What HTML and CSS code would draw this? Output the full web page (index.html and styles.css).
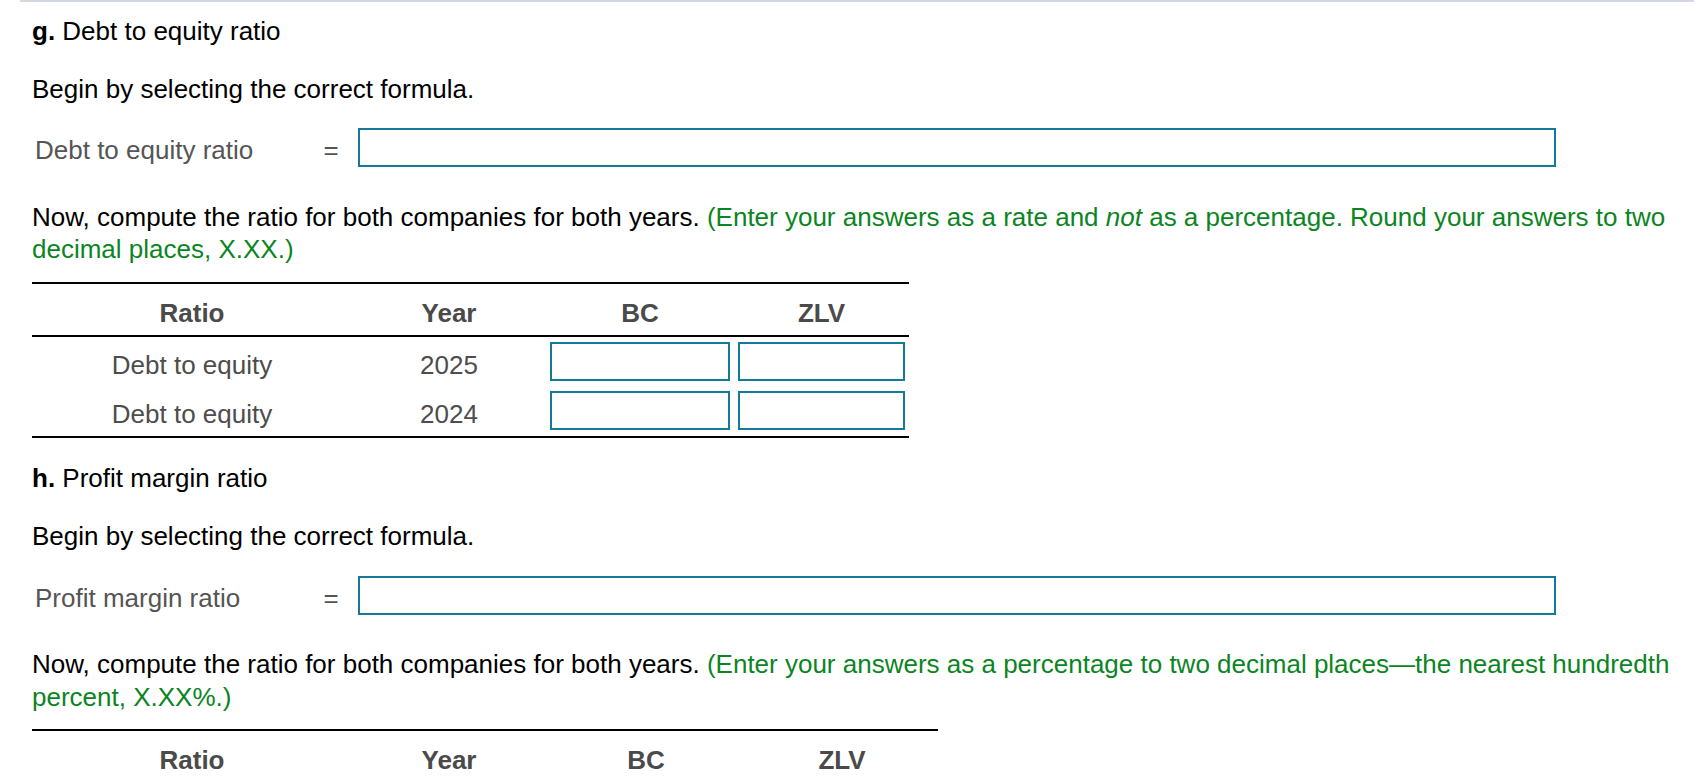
FILE: index.html
```html
<!DOCTYPE html>
<html lang="en">
<head>
<meta charset="utf-8">
<title>Ratios</title>
<link rel="stylesheet" href="styles.css">
</head>
<body>
<div class="topline"></div>

<section class="part">
  <p class="part-title"><b>g.</b> Debt to equity ratio</p>
  <p class="lead">Begin by selecting the correct formula.</p>
  <div class="formula">
    <span class="formula-label">Debt to equity ratio</span>
    <span class="eq">=</span>
    <span class="answer answer-wide"></span>
  </div>
  <p class="instr">Now, compute the ratio for both companies for both years. <span class="note">(Enter your answers as a rate and <em>not</em> as a percentage. Round your answers to two decimal places, X.XX.)</span></p>
  <table class="grid grid-g">
    <thead>
      <tr>
        <th class="c-ratio">Ratio</th>
        <th class="c-year">Year</th>
        <th class="c-bc-g">BC</th>
        <th class="c-zlv-g">ZLV</th>
      </tr>
    </thead>
    <tbody>
      <tr>
        <td class="txt">Debt to equity</td>
        <td class="txt">2025</td>
        <td class="cell-in"><span class="answer"></span></td>
        <td class="cell-in"><span class="answer"></span></td>
      </tr>
      <tr>
        <td class="txt">Debt to equity</td>
        <td class="txt">2024</td>
        <td class="cell-in"><span class="answer"></span></td>
        <td class="cell-in"><span class="answer"></span></td>
      </tr>
    </tbody>
  </table>
</section>

<section class="part">
  <p class="part-title"><b>h.</b> Profit margin ratio</p>
  <p class="lead">Begin by selecting the correct formula.</p>
  <div class="formula">
    <span class="formula-label">Profit margin ratio</span>
    <span class="eq">=</span>
    <span class="answer answer-wide"></span>
  </div>
  <p class="instr">Now, compute the ratio for both companies for both years. <span class="note">(Enter your answers as a percentage to two decimal places—the nearest hundredth percent, X.XX%.)</span></p>
  <table class="grid grid-h">
    <thead>
      <tr>
        <th class="c-ratio">Ratio</th>
        <th class="c-year">Year</th>
        <th class="c-bc-h">BC</th>
        <th class="c-zlv-h">ZLV</th>
      </tr>
    </thead>
    <tbody>
      <tr>
        <td class="txt">Profit margin</td>
        <td class="txt">2025</td>
        <td class="cell-in"><span class="answer"></span></td>
        <td class="cell-in"><span class="answer"></span></td>
      </tr>
      <tr>
        <td class="txt">Profit margin</td>
        <td class="txt">2024</td>
        <td class="cell-in"><span class="answer"></span></td>
        <td class="cell-in"><span class="answer"></span></td>
      </tr>
    </tbody>
  </table>
</section>
</body>
</html>
```

FILE: styles.css
```css
html {
  overflow: hidden;
}

body {
  margin: 0;
  background: #ffffff;
  color: #000000;
  font-family: "Liberation Sans", Arial, Helvetica, sans-serif;
  font-size: 26px;
  line-height: 32.5px;
}

.topline {
  margin-left: 20px;
  height: 2px;
  background: #d3d8e3;
}

.part {
  padding: 12.7px 0 0 32px;
}

.part + .part {
  margin-top: 11.5px;
}

.part-title {
  margin: 0;
}

.lead {
  margin: 25.5px 0 0;
}

.formula {
  display: flex;
  margin-top: 23.3px;
  height: 39px;
}

.formula-label {
  box-sizing: border-box;
  width: 284px;
  padding: 6px 0 0 3px;
  color: #555555;
}

.eq {
  width: 30px;
  padding-top: 6px;
  text-align: center;
  color: #555555;
}

.answer {
  display: block;
  box-sizing: border-box;
  height: 39px;
  border: 2px solid #15799a;
  background: #ffffff;
}

.answer-wide {
  width: 1198px;
  margin-left: 12px;
}

.instr {
  margin: 33.2px 0 0;
}

.note {
  color: #0b851f;
}

.grid {
  margin-top: 16.3px;
  border-collapse: separate;
  border-spacing: 0;
  table-layout: fixed;
  border-top: 2px solid #000000;
  border-bottom: 2px solid #000000;
  color: #4d4d4d;
}

.grid-g {
  width: 877px;
}

.grid-h {
  width: 906px;
}

.grid th {
  box-sizing: border-box;
  padding: 13px 4px 5.5px;
  border-bottom: 2px solid #000000;
  font-weight: bold;
  text-align: center;
  color: #4a4a4a;
}

.c-ratio { width: 320px; }
.c-year { width: 194px; }
.c-bc-g { width: 188px; }
.c-zlv-g { width: 175px; }
.c-bc-h { width: 200px; }
.c-zlv-h { width: 192px; }

.grid td {
  box-sizing: border-box;
}

.txt {
  padding: 12px 4px 5px;
  text-align: center;
  vertical-align: top;
}

.cell-in {
  padding: 5px 4px 5.5px;
  vertical-align: top;
}
```
